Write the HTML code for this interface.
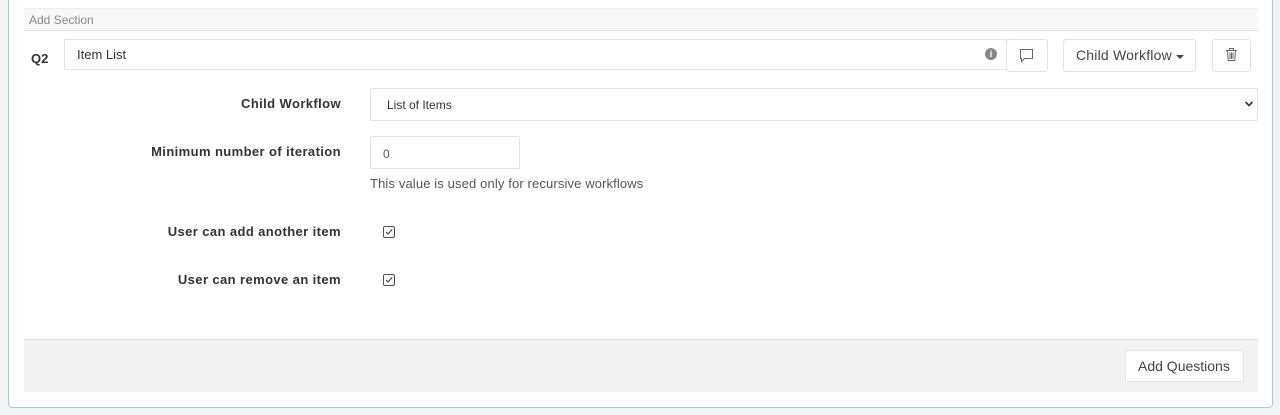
<!DOCTYPE html>
<html><head><meta charset="utf-8"><style>
*{box-sizing:border-box;margin:0;padding:0}
body{width:1280px;height:415px;background:#f3f4f5;font-family:"Liberation Sans",sans-serif;color:#333;position:relative;overflow:hidden}
.a{position:absolute}
.card{left:8px;top:-10px;width:1265px;height:418px;background:#fff;border:1px solid #9fcfd3;border-radius:4px}
.inp{background:#fff;border:1px solid #e3e3e3;border-radius:2px}
.lbl{font-weight:bold;font-size:13px;color:#333;text-align:right;width:320px;left:21px;letter-spacing:0.4px}
.btn{background:#fff;border:1px solid #e3e3e3;border-radius:3px}
.cb{width:12px;height:12px;border:1px solid #555;border-radius:2px}
</style></head><body>
<div class="a card"></div>
<div class="a" style="left:24px;top:8px;width:1234px;height:23px;background:#f8f8f8;border-bottom:1px solid #e4e4e4;border-top:1px solid #eee"></div>
<div class="a" style="left:29px;top:13px;font-size:12px;color:#888">Add Section</div>
<div class="a" style="left:31px;top:51px;font-size:13px;font-weight:bold">Q2</div>
<div class="a inp" style="left:64px;top:39px;width:943px;height:31px"></div>
<div class="a" style="left:77px;top:47px;font-size:13px;color:#333">Item List</div>
<div class="a" style="left:985px;top:48px;width:12px;height:12px;border-radius:50%;background:#888;color:#fff;font-size:9px;font-weight:bold;text-align:center;line-height:12px">i</div>
<div class="a btn" style="left:1006px;top:39px;width:42px;height:33px"></div>
<svg class="a" style="left:1019px;top:48px" width="15" height="15" viewBox="0 0 15 15"><path d="M1.5 1.5h12v9h-8l-3 3v-3h-1z" fill="none" stroke="#666" stroke-width="1"/></svg>
<div class="a btn" style="left:1063px;top:39px;width:133px;height:33px"></div>
<div class="a" style="left:1076px;top:47px;font-size:14px;color:#444;letter-spacing:0.2px">Child Workflow</div>
<div class="a" style="left:1176px;top:55px;border-left:4px solid transparent;border-right:4px solid transparent;border-top:4px solid #444"></div>
<div class="a btn" style="left:1212px;top:39px;width:39px;height:33px"></div>
<svg class="a" style="left:1225px;top:47px" width="13" height="15" viewBox="0 0 13 15"><path d="M1 3.5h11M4.5 3.5V1.5h4v2M2.5 3.5l.7 10h6.6l.7-10M5 5.5v6.5M6.5 5.5v6.5M8 5.5v6.5" fill="none" stroke="#666" stroke-width="1"/></svg>
<div class="a lbl" style="top:96px">Child Workflow</div>
<div class="a inp" style="left:370px;top:88px;width:888px;height:33px"></div>
<div class="a" style="left:387px;top:98px;font-size:12px;color:#333">List of Items</div>
<svg class="a" style="left:1244px;top:100px" width="10" height="8" viewBox="0 0 10 8"><path d="M1.5 2l3.5 3.5 3.5-3.5" fill="none" stroke="#333" stroke-width="1.6"/></svg>
<div class="a lbl" style="top:144px">Minimum number of iteration</div>
<div class="a inp" style="left:370px;top:136px;width:150px;height:33px"></div>
<div class="a" style="left:383px;top:147px;font-size:12px;color:#555">0</div>
<div class="a" style="left:370px;top:176px;font-size:13px;color:#555;letter-spacing:0.13px">This value is used only for recursive workflows</div>
<div class="a lbl" style="top:224px">User can add another item</div>
<div class="a cb" style="left:383px;top:226px"></div>
<svg class="a" style="left:385px;top:228px" width="8" height="8" viewBox="0 0 8 8"><path d="M1 4l2 2 4-4.5" fill="none" stroke="#333" stroke-width="1"/></svg>
<div class="a lbl" style="top:272px">User can remove an item</div>
<div class="a cb" style="left:383px;top:274px"></div>
<svg class="a" style="left:385px;top:276px" width="8" height="8" viewBox="0 0 8 8"><path d="M1 4l2 2 4-4.5" fill="none" stroke="#333" stroke-width="1"/></svg>
<div class="a" style="left:24px;top:339px;width:1234px;height:53px;background:#f2f2f2;border-top:1px solid #e0e0e0"></div>
<div class="a btn" style="left:1125px;top:350px;width:119px;height:32px"></div>
<div class="a" style="left:1138px;top:358px;font-size:14px;color:#444">Add Questions</div>
</body></html>
